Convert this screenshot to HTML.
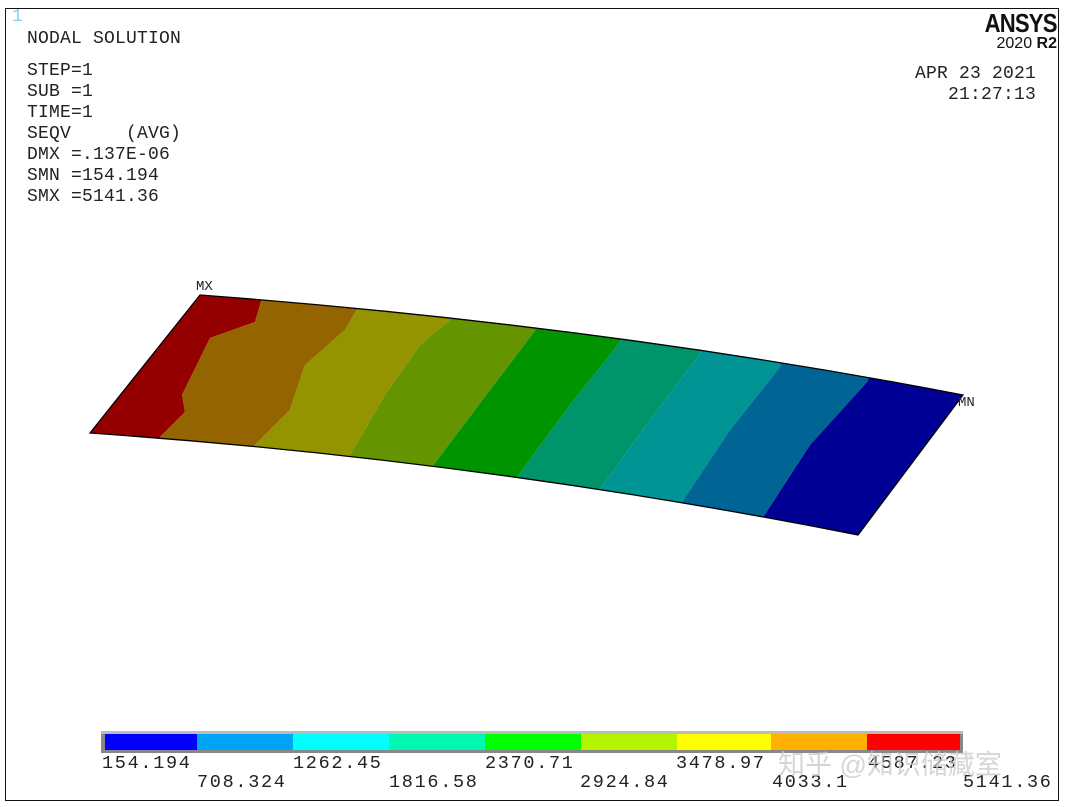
<!DOCTYPE html>
<html><head><meta charset="utf-8"><style>
html,body{margin:0;padding:0;background:#fff;}
body{width:1066px;height:807px;position:relative;overflow:hidden;font-family:"Liberation Mono",monospace;}
.t{position:absolute;font-size:18px;letter-spacing:0.2px;line-height:21px;color:#222;white-space:pre;}
.l{letter-spacing:1.7px;font-size:18.5px;}
#frame{position:absolute;left:5px;top:8px;width:1052px;height:791px;border:1.5px solid #111;}
</style></head><body>
<div id="frame"></div>
<div class="t" style="left:12px;top:7px;color:#7fd6e8;">1</div>
<div class="t" style="left:27px;top:29px;">NODAL SOLUTION</div>
<div class="t" style="left:27px;top:61px;">STEP=1
SUB =1
TIME=1
SEQV     (AVG)
DMX =.137E-06
SMN =154.194
SMX =5141.36</div>
<div class="t" style="left:915px;top:64px;">APR 23 2021
   21:27:13</div>
<div style="position:absolute;right:9px;top:8px;font-family:'Liberation Sans',sans-serif;font-weight:bold;font-size:26px;letter-spacing:-1px;color:#111;transform:scaleX(0.85);transform-origin:right;">ANSYS</div>
<div style="position:absolute;right:9px;top:35px;font-family:'Liberation Sans',sans-serif;font-size:16px;color:#111;">2020 <b>R2</b></div>
<svg width="1066" height="807" style="position:absolute;left:0;top:0">
<defs><clipPath id="c"><path d="M200,295 Q600,325 963,395 L858,535 Q480,460 90,433 Z"/></clipPath></defs>
<g clip-path="url(#c)">
<polygon fill="#940000" points="200,280 265,280 262,298 255,322 210,338 182,395 185,412 160,437 150,460 60,460 60,280"/>
<polygon fill="#946400" points="265,280 362,280 358,308 345,330 305,365 290,410 255,445 250,470 150,470 160,437 185,412 182,395 210,338 255,322 262,298"/>
<polygon fill="#949400" points="362,280 460,280 450,320 420,345 385,395 350,455 340,480 250,480 255,445 290,410 305,365 345,330 358,308"/>
<polygon fill="#649400" points="460,280 545,280 535,331 490,390 432,467 420,490 340,490 350,455 385,395 420,345 450,320"/>
<polygon fill="#009400" points="545,280 632,280 620,342 570,405 515,480 505,500 420,500 432,467 490,390 535,331"/>
<polygon fill="#00946a" points="632,280 712,280 700,354 650,420 598,492 590,520 505,520 515,480 570,405 620,342"/>
<polygon fill="#009494" points="712,280 792,280 780,367 730,430 680,505 670,540 590,540 598,492 650,420 700,354"/>
<polygon fill="#006494" points="792,280 882,280 868,381 810,445 762,519 750,560 670,560 680,505 730,430 780,367"/>
<polygon fill="#000094" points="882,280 1000,280 1000,560 750,560 762,519 810,445 868,381"/>
</g>
<path d="M200,295 Q600,325 963,395 L858,535 Q480,460 90,433 Z" fill="none" stroke="#000" stroke-width="1.3"/>
<text x="196" y="290" font-family="Liberation Mono" font-size="14" fill="#222">MX</text>
<text x="958" y="406" font-family="Liberation Mono" font-size="14" fill="#222">MN</text>
<rect x="101" y="731" width="862" height="22" fill="#888"/>
<rect x="101" y="731" width="862" height="3" fill="#bbb"/>
<g>
<rect x="105" y="734" width="92" height="16" fill="#0000ff"/>
<rect x="197" y="734" width="96" height="16" fill="#00a4f4"/>
<rect x="293" y="734" width="96" height="16" fill="#00ffff"/>
<rect x="389" y="734" width="96" height="16" fill="#00f8b0"/>
<rect x="485" y="734" width="96" height="16" fill="#00ff00"/>
<rect x="581" y="734" width="96" height="16" fill="#b4f400"/>
<rect x="677" y="734" width="94" height="16" fill="#ffff00"/>
<rect x="771" y="734" width="96" height="16" fill="#ffb000"/>
<rect x="867" y="734" width="93" height="16" fill="#ff0000"/>
</g>
</svg>
<div class="t l" style="left:102px;top:753px;">154.194</div>
<div class="t l" style="left:293px;top:753px;">1262.45</div>
<div class="t l" style="left:485px;top:753px;">2370.71</div>
<div class="t l" style="left:676px;top:753px;">3478.97</div>
<div class="t l" style="left:868px;top:753px;">4587.23</div>
<div class="t l" style="left:197px;top:772px;">708.324</div>
<div class="t l" style="left:389px;top:772px;">1816.58</div>
<div class="t l" style="left:580px;top:772px;">2924.84</div>
<div class="t l" style="left:772px;top:772px;">4033.1</div>
<div class="t l" style="left:963px;top:772px;">5141.36</div>
<div style="position:absolute;left:778px;top:743px;font-family:'Liberation Sans','Noto Sans CJK SC',sans-serif;font-size:27px;color:rgba(200,200,200,0.75);white-space:nowrap;">知乎 @知识储藏室</div>
</body></html>
